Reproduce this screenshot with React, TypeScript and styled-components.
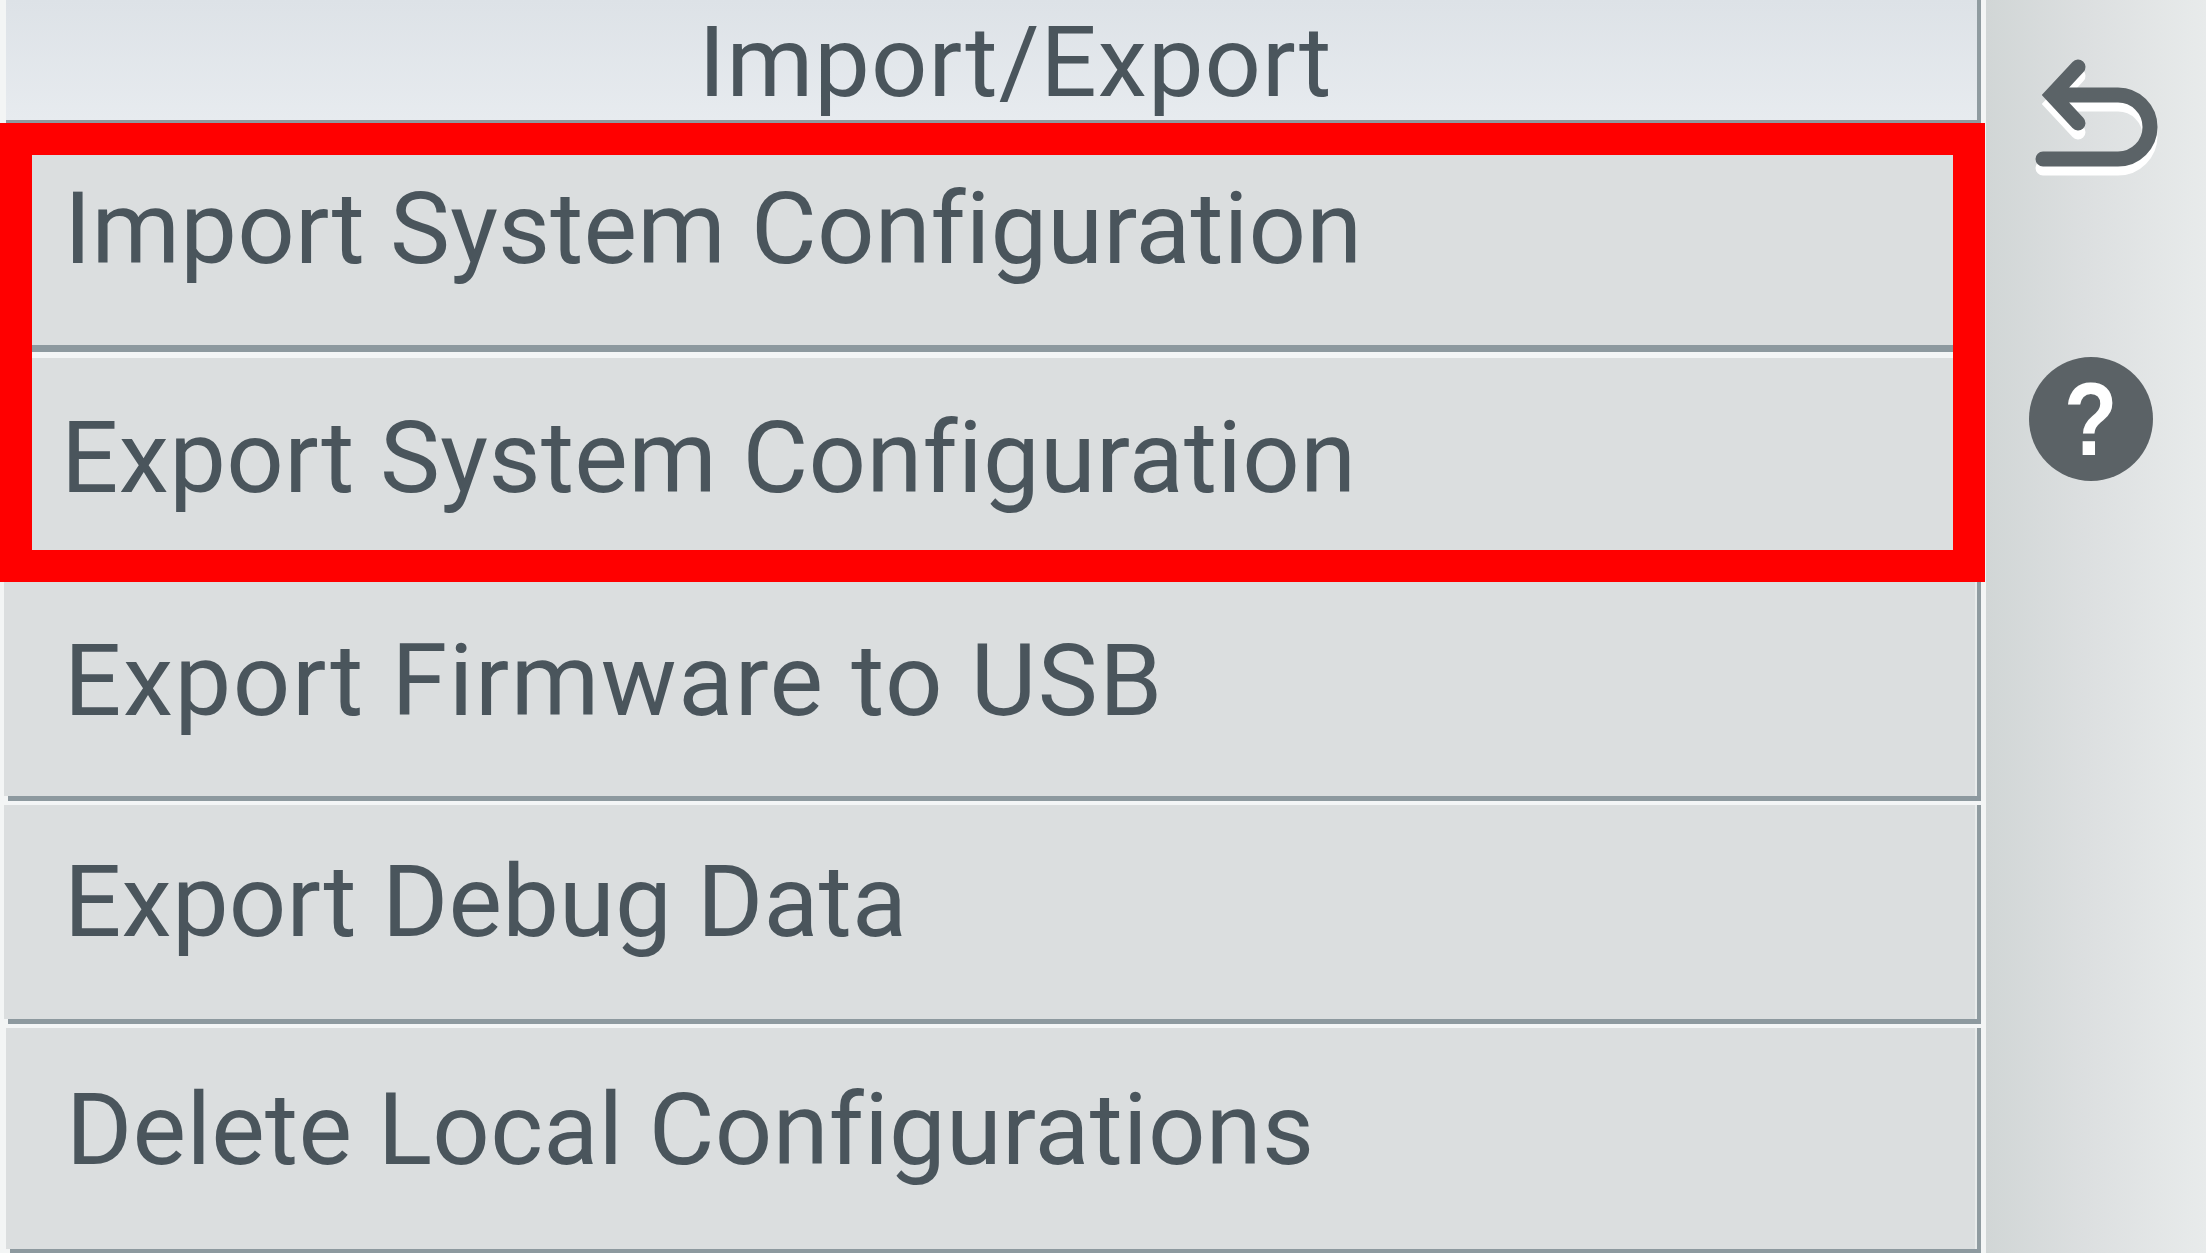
import { createGlobalStyle, styled } from "styled-components";

const menuItems = [
  { text: "Import System Configuration", height: 222, top: 55, left: 60, inset: 0, spacing: 0.13, rule: "heavy" },
  { text: "Export System Configuration", height: 225, top: 49, left: 57, inset: 0, spacing: 0.34, rule: "none" },
  { text: "Export Firmware to USB", height: 213, top: 47, left: 60, inset: 0, spacing: 1.55, rule: "normal" },
  { text: "Export Debug Data", height: 214, top: 46, left: 60, inset: 0, spacing: 0.19, rule: "normal" },
  { text: "Delete Local Configurations", height: 221, top: 51, left: 60, inset: 2, spacing: 0.29, rule: "last" },
] as const;

const GlobalStyle = createGlobalStyle`
  html, body {
    margin: 0;
    padding: 0;
    background: #fbfcfc;
    overflow: hidden;
  }
`;

const Screen = styled.div`
  position: relative;
  display: flex;
  width: 2206px;
  height: 1253px;
  font-family: Roboto, "Liberation Sans", sans-serif;
  color: #4a555c;
`;

const Main = styled.div`
  flex: none;
  display: flex;
  flex-direction: column;
  width: 1986px;
  padding-left: 4px;
  box-sizing: border-box;
  background: #f3f5f5;
  border-right: 5px solid #f3f5f5;
`;

const Header = styled.div`
  flex: none;
  height: 106px;
  margin-left: 2px;
  padding: 14px 0 0 48px;
  border-right: 4px solid #8f9ba0;
  border-bottom: 3px solid #8f9ba0;
  background: linear-gradient(#dde2e7, #e7ebef);
  text-align: center;
  font-size: 99px;
  line-height: 96px;
`;

const Title = styled.span`
  letter-spacing: 1px;
`;

const Row = styled.div<{ $height: number; $top: number; $left: number; $inset: number }>`
  flex: none;
  box-sizing: border-box;
  height: ${(p) => p.$height}px;
  margin-left: ${(p) => p.$inset}px;
  padding: ${(p) => p.$top}px 0 0 ${(p) => p.$left}px;
  background: #dbdedf;
  border-right: 4px solid #8f9ba0;
  box-shadow: inset -2px 0 0 #e8ebeb;
  font-size: 101px;
  line-height: 101px;
  white-space: nowrap;
`;

const RowLabel = styled.span<{ $spacing: number }>`
  letter-spacing: ${(p) => p.$spacing}px;
`;

const Rule = styled.div<{ $thick: number; $gap: number; $inset: number }>`
  flex: none;
  margin-left: ${(p) => p.$inset}px;
  border-top: ${(p) => p.$thick}px solid #8d999f;
  height: ${(p) => p.$gap}px;
  background: #f3f5f6;
`;

const Sidebar = styled.div`
  flex: none;
  width: 220px;
  box-sizing: border-box;
  display: flex;
  flex-direction: column;
  align-items: flex-start;
  padding: 50px 0 0 43px;
  background: linear-gradient(90deg, #d1d6d6, #dcdfe0 45%, #e8ebeb);
`;

const BackIcon = styled.svg`
  display: block;
  width: 135px;
  height: 130px;
  fill: none;
  stroke-width: 15;
  stroke-linecap: round;
  stroke-linejoin: miter;
`;

const HelpButton = styled.div`
  margin-top: 177px;
  width: 124px;
  height: 124px;
  border-radius: 50%;
  background: #5b6266;
  color: #fff;
  display: flex;
  align-items: center;
  justify-content: center;
  font-family: "Liberation Sans", sans-serif;
  font-weight: 700;
  font-size: 104px;
  line-height: 1;
`;

const HelpMark = styled.span`
  display: block;
  transform: scaleX(0.84);
`;

const Highlight = styled.div`
  position: absolute;
  left: 0;
  top: 123px;
  width: 1985px;
  height: 459px;
  box-sizing: border-box;
  border: 32px solid #ff0000;
  pointer-events: none;
`;

function Back() {
  return (
    <BackIcon viewBox="0 0 135 130">
      <path d="M49 26 L23 54 L49 82 M23 54 H89 A32 32 0 0 1 89 118 H14" stroke="#ffffff" />
      <path d="M49 17 L23 45 L49 73 M23 45 H89 A32 32 0 0 1 89 109 H14" stroke="#5b6367" />
    </BackIcon>
  );
}

export default function App() {
  return (
    <>
      <GlobalStyle />
      <Screen>
        <Main>
          <Header>
            <Title>Import/Export</Title>
          </Header>
          {menuItems.map((item) => (
            <div key={item.text}>
              <Row $height={item.height} $top={item.top} $left={item.left} $inset={item.inset}>
                <RowLabel $spacing={item.spacing}>{item.text}</RowLabel>
              </Row>
              {item.rule === "heavy" && <Rule $thick={7} $gap={6} $inset={4} />}
              {item.rule === "normal" && <Rule $thick={5} $gap={4} $inset={4} />}
              {item.rule === "last" && <Rule $thick={4} $gap={0} $inset={6} />}
            </div>
          ))}
        </Main>
        <Sidebar>
          <Back />
          <HelpButton>
            <HelpMark>?</HelpMark>
          </HelpButton>
        </Sidebar>
        <Highlight />
      </Screen>
    </>
  );
}
